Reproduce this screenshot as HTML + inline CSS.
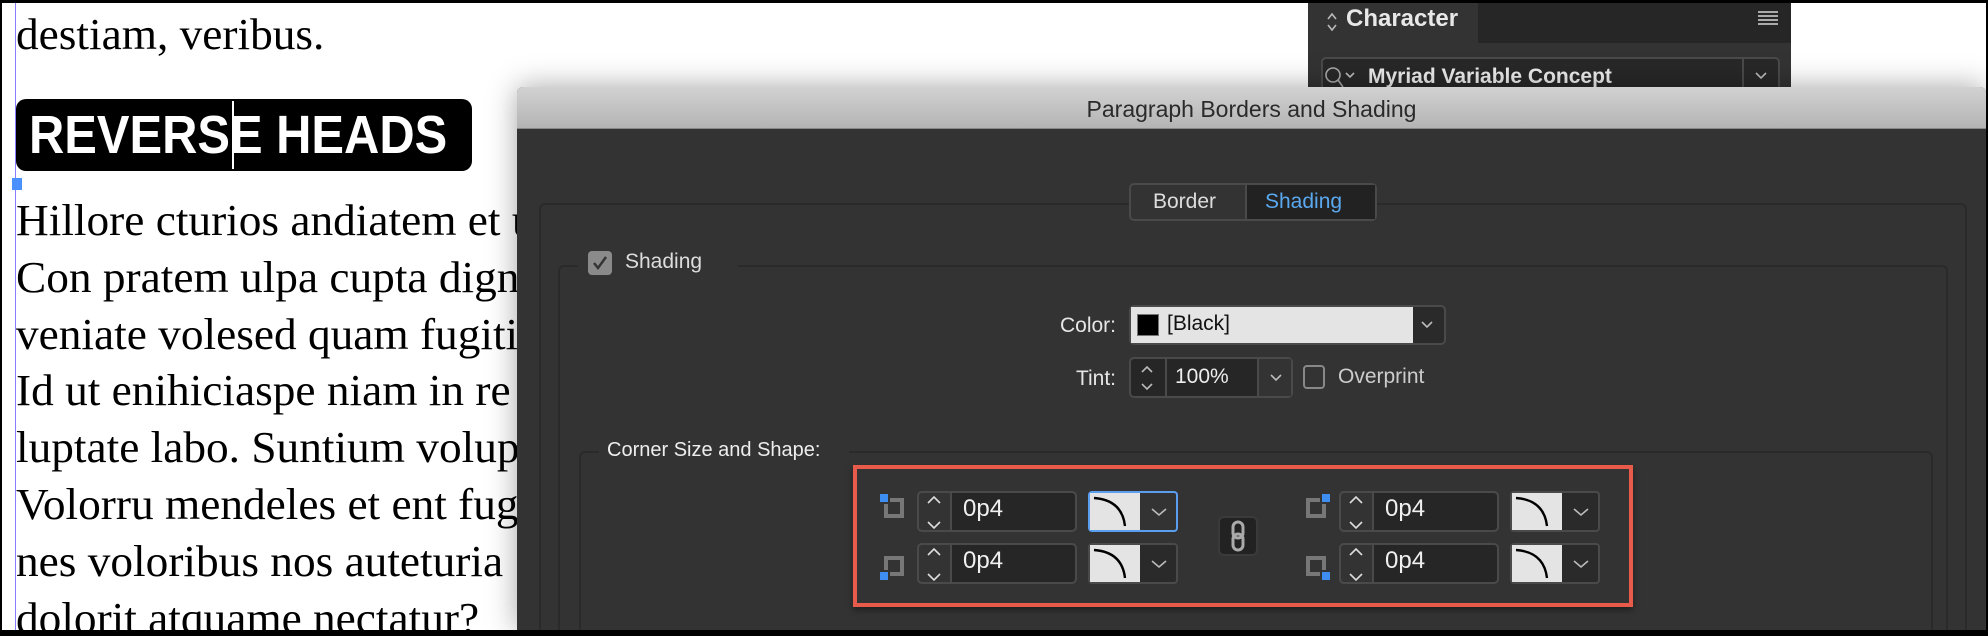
<!DOCTYPE html>
<html><head><meta charset="utf-8"><style>
*{margin:0;padding:0;box-sizing:border-box}
html{width:1988px;height:636px;overflow:hidden}
body{width:1988px;height:636px;overflow:hidden;background:#000;position:relative;font-family:"Liberation Sans",sans-serif}
.a{position:absolute}
#page{left:2px;top:3px;width:1984px;height:627px;background:#fff;overflow:hidden}
.ser{font-family:"Liberation Serif",serif;font-size:44px;color:#000;white-space:nowrap;line-height:1;transform:scaleX(1.03);transform-origin:left top}
.fld{border:2px solid #4a4a4a;border-radius:5px;background:#262626}
.lt{color:#e6e6e6;font-size:20px}
.chev{stroke:#bbb;stroke-width:1.6;fill:none}
</style></head><body>
<div id="page" class="a">
  <div class="a" style="left:13px;top:0;width:1px;height:627px;background:#8a7cff"></div>
  <div class="a ser" style="left:14px;top:10px">destiam, veribus.</div>
  <div class="a" style="left:14px;top:96px;width:456px;height:72px;background:#000;border-radius:10px"></div>
  <div class="a" style="left:27px;top:99px;color:#fff;font-weight:bold;font-size:54px;white-space:nowrap;transform:scaleX(0.905);transform-origin:left top;line-height:66px">REVERSE HEADS</div>
  <div class="a" style="left:230px;top:98px;width:2px;height:68px;background:#fff"></div>
  <div class="a" style="left:10px;top:175px;width:10px;height:12px;background:#4a90ff"></div>
  <div class="a ser" style="left:14px;top:196px">Hillore cturios andiatem et ut</div>
  <div class="a ser" style="left:14px;top:253px">Con pratem ulpa cupta dignis</div>
  <div class="a ser" style="left:14px;top:310px">veniate volesed quam fugiti</div>
  <div class="a ser" style="left:14px;top:366px">Id ut enihiciaspe niam in re</div>
  <div class="a ser" style="left:14px;top:423px">luptate labo. Suntium volup</div>
  <div class="a ser" style="left:14px;top:480px">Volorru mendeles et ent fuga</div>
  <div class="a ser" style="left:14px;top:537px">nes voloribus nos auteturia</div>
  <div class="a ser" style="left:14px;top:594px;height:33px;overflow:hidden">dolorit atquame nectatur?</div>
</div>

<!-- character panel -->
<div class="a" style="left:1308px;top:3px;width:483px;height:90px;background:#333;overflow:hidden">
  <div class="a" style="left:170px;top:0;width:313px;height:40px;background:#262626"></div>
  <svg class="a" style="left:18px;top:8px" width="12" height="22"><path d="M2 8 L6 3 L10 8 M2 14 L6 19 L10 14" class="chev" stroke="#999"/></svg>
  <div class="a" style="left:38px;top:2px;color:#e8e8e8;font-weight:bold;font-size:24px">Character</div>
  <svg class="a" style="left:450px;top:7px" width="20" height="16"><path d="M0 2H20M0 6H20M0 10H20M0 14H20" stroke="#aaa" stroke-width="2"/></svg>
  <div class="a fld" style="left:13px;top:54px;width:459px;height:36px;background:#282828"></div>
  <div class="a" style="left:434px;top:56px;width:2px;height:34px;background:#4a4a4a"></div>
  <svg class="a" style="left:446px;top:68px" width="14" height="10"><path d="M2 2L7 7L12 2" class="chev"/></svg>
  <svg class="a" style="left:16px;top:62px" width="40" height="26"><circle cx="9" cy="10" r="7" stroke="#aaa" stroke-width="1.6" fill="none"/><path d="M14 15L19 22" stroke="#aaa" stroke-width="1.6"/><path d="M22 8L26 12L30 8" class="chev"/></svg>
  <div class="a" style="left:60px;top:62px;color:#eee;font-size:21px;font-weight:bold">Myriad Variable Concept</div>
</div>

<!-- dialog -->
<div class="a" style="left:517px;top:87px;width:1469px;height:543px;background:#333;border-radius:6px 6px 0 0;box-shadow:0 0 30px rgba(0,0,0,.35);overflow:hidden">
  <div class="a" style="left:0;top:0;width:1469px;height:42px;background:linear-gradient(#d2d2d2,#b4b4b4);border-bottom:1px solid #888"></div>
  <div class="a" style="left:0;top:9px;width:1469px;text-align:center;color:#2a2a2a;font-size:23px">Paragraph Borders and Shading</div>
  <div class="a" style="left:22px;top:116px;width:1428px;height:432px;border:2px solid #2a2a2a;border-radius:6px"></div>
  <div class="a" style="left:41px;top:178px;width:1390px;height:370px;border:2px solid #2a2a2a;border-radius:6px"></div>
  <div class="a" style="left:62px;top:364px;width:1354px;height:184px;border:2px solid #2a2a2a;border-radius:6px"></div>
  <!-- tabs -->
  <div class="a" style="left:612px;top:96px;width:248px;height:38px;border:2px solid #4a4a4a;border-radius:5px;background:#333"></div>
  <div class="a" style="left:728px;top:98px;width:130px;height:34px;background:#222;border-left:2px solid #4a4a4a"></div>
  <div class="a lt" style="left:636px;top:103px;font-size:21px;color:#ddd">Border</div>
  <div class="a" style="left:748px;top:103px;font-size:21px;color:#5aa9f0">Shading</div>
  <!-- shading checkbox -->
  <div class="a" style="left:61px;top:163px;width:160px;height:30px;background:#333"></div>
  <div class="a" style="left:71px;top:164px;width:24px;height:24px;background:#8a8a8a;border-radius:4px"></div>
  <svg class="a" style="left:71px;top:164px" width="24" height="24"><path d="M6 12L10 17L18 6" stroke="#333" stroke-width="2.4" fill="none"/></svg>
  <div class="a lt" style="left:108px;top:163px;font-size:21px;color:#ddd">Shading</div>
  <!-- color -->
  <div class="a lt" style="left:480px;top:227px;width:119px;text-align:right;font-size:21px">Color:</div>
  <div class="a" style="left:612px;top:218px;width:317px;height:40px;border:2px solid #4a4a4a;border-radius:5px;background:#2a2a2a"></div>
  <div class="a" style="left:614px;top:220px;width:282px;height:36px;background:#e4e4e4"></div>
  <div class="a" style="left:620px;top:227px;width:22px;height:22px;background:#000;border:1px solid #777"></div>
  <div class="a" style="left:650px;top:225px;font-size:21px;color:#111">[Black]</div>
  <svg class="a" style="left:903px;top:233px" width="14" height="10"><path d="M2 2L7 7L12 2" class="chev"/></svg>
  <!-- tint -->
  <div class="a lt" style="left:480px;top:280px;width:119px;text-align:right;font-size:21px">Tint:</div>
  <div class="a fld" style="left:612px;top:270px;width:164px;height:41px"></div>
  <div class="a" style="left:648px;top:272px;width:2px;height:37px;background:#4a4a4a"></div>
  <div class="a" style="left:740px;top:272px;width:2px;height:37px;background:#4a4a4a"></div>
  <div class="a" style="left:742px;top:272px;width:32px;height:37px;background:#333"></div>
  <svg class="a" style="left:622px;top:277px" width="16" height="28"><path d="M3 8L8 3L13 8M3 20L8 25L13 20" class="chev" stroke="#ddd"/></svg>
  <div class="a" style="left:658px;top:278px;font-size:21px;color:#eee">100%</div>
  <svg class="a" style="left:752px;top:286px" width="14" height="10"><path d="M2 2L7 7L12 2" class="chev"/></svg>
  <div class="a" style="left:786px;top:278px;width:22px;height:24px;border:2px solid #888;border-radius:4px"></div>
  <div class="a" style="left:821px;top:278px;font-size:21px;color:#ccc">Overprint</div>
  <!-- corner label -->
  <div class="a" style="left:82px;top:350px;width:250px;height:28px;background:#333"></div>
  <div class="a lt" style="left:90px;top:352px;font-size:20px;color:#eee">Corner Size and Shape:</div>
  <!-- red box -->
  <div class="a" style="left:336px;top:378px;width:780px;height:142px;border:4px solid #e85a4a;box-shadow:0 3px 6px rgba(0,0,0,.4)"></div>
</div>

<!-- corner icons -->
<svg class="a" style="left:0;top:0" width="1988" height="636">
  <g fill="none" stroke="#777" stroke-width="4">
    <rect x="886" y="500" width="16" height="16"/>
    <rect x="886" y="558" width="16" height="16"/>
    <rect x="1308" y="500" width="16" height="16"/>
    <rect x="1308" y="558" width="16" height="16"/>
  </g>
  <g fill="#3d8ef0" stroke="#333" stroke-width="2">
    <rect x="879" y="493" width="10" height="10"/>
    <rect x="879" y="571" width="10" height="10"/>
    <rect x="1321" y="493" width="10" height="10"/>
    <rect x="1321" y="571" width="10" height="10"/>
  </g>
</svg>

<div class="a fld" style="left:917px;top:491px;width:160px;height:41px"></div>
<div class="a fld" style="left:917px;top:543px;width:160px;height:41px"></div>
<div class="a fld" style="left:1339px;top:491px;width:160px;height:41px"></div>
<div class="a fld" style="left:1339px;top:543px;width:160px;height:41px"></div>
<div class="a" style="left:917px;top:491px;width:35px;height:41px;background:#333;border:2px solid #4a4a4a;border-radius:5px 0 0 5px"></div>
<div class="a" style="left:917px;top:543px;width:35px;height:41px;background:#333;border:2px solid #4a4a4a;border-radius:5px 0 0 5px"></div>
<div class="a" style="left:1339px;top:491px;width:35px;height:41px;background:#333;border:2px solid #4a4a4a;border-radius:5px 0 0 5px"></div>
<div class="a" style="left:1339px;top:543px;width:35px;height:41px;background:#333;border:2px solid #4a4a4a;border-radius:5px 0 0 5px"></div>

<svg class="a" style="left:0;top:0" width="1988" height="636">
  <g stroke="#ddd" fill="none" stroke-width="1.6">
    <path d="M928 503L934 497L940 503M928 522L934 528L940 522"/>
    <path d="M928 555L934 549L940 555M928 574L934 580L940 574"/>
    <path d="M1350 503L1356 497L1362 503M1350 522L1356 528L1362 522"/>
    <path d="M1350 555L1356 549L1362 555M1350 574L1356 580L1362 574"/>
  </g>
</svg>
<div class="a" style="left:963px;top:495px;font-size:24px;color:#f0f0f0">0p4</div>
<div class="a" style="left:963px;top:547px;font-size:24px;color:#f0f0f0">0p4</div>
<div class="a" style="left:1385px;top:495px;font-size:24px;color:#f0f0f0">0p4</div>
<div class="a" style="left:1385px;top:547px;font-size:24px;color:#f0f0f0">0p4</div>

<!-- shape dropdowns -->
<div class="a" style="left:1088px;top:491px;width:90px;height:41px;background:#333;border:2px solid #5a9ef0;border-radius:4px"></div>
<div class="a" style="left:1090px;top:493px;width:50px;height:37px;background:#e4e4e4"></div>
<div class="a" style="left:1088px;top:543px;width:90px;height:41px;background:#2a2a2a;border:2px solid #4a4a4a;border-radius:4px"></div>
<div class="a" style="left:1090px;top:545px;width:50px;height:37px;background:#e4e4e4"></div>
<div class="a" style="left:1510px;top:491px;width:90px;height:41px;background:#2a2a2a;border:2px solid #4a4a4a;border-radius:4px"></div>
<div class="a" style="left:1512px;top:493px;width:50px;height:37px;background:#e4e4e4"></div>
<div class="a" style="left:1510px;top:543px;width:90px;height:41px;background:#2a2a2a;border:2px solid #4a4a4a;border-radius:4px"></div>
<div class="a" style="left:1512px;top:545px;width:50px;height:37px;background:#e4e4e4"></div>
<svg class="a" style="left:0;top:0" width="1988" height="636">
  <g stroke="#000" stroke-width="2.4" fill="none">
    <path d="M1094 498Q1122 500 1125 526"/>
    <path d="M1094 550Q1122 552 1125 578"/>
    <path d="M1516 498Q1544 500 1547 526"/>
    <path d="M1516 550Q1544 552 1547 578"/>
  </g>
  <g stroke="#bbb" stroke-width="1.6" fill="none">
    <path d="M1152 509L1159 515L1166 509"/>
    <path d="M1152 561L1159 567L1166 561"/>
    <path d="M1574 509L1581 515L1588 509"/>
    <path d="M1574 561L1581 567L1588 561"/>
  </g>
  <rect x="1219" y="517" width="38" height="38" rx="5" fill="#222" stroke="#3a3a3a" stroke-width="2"/>
  <g stroke="#aaa" stroke-width="3" fill="none">
    <rect x="1233" y="522" width="10" height="16" rx="5"/>
    <rect x="1233" y="534" width="10" height="16" rx="5"/>
  </g>
</svg>
</body></html>
